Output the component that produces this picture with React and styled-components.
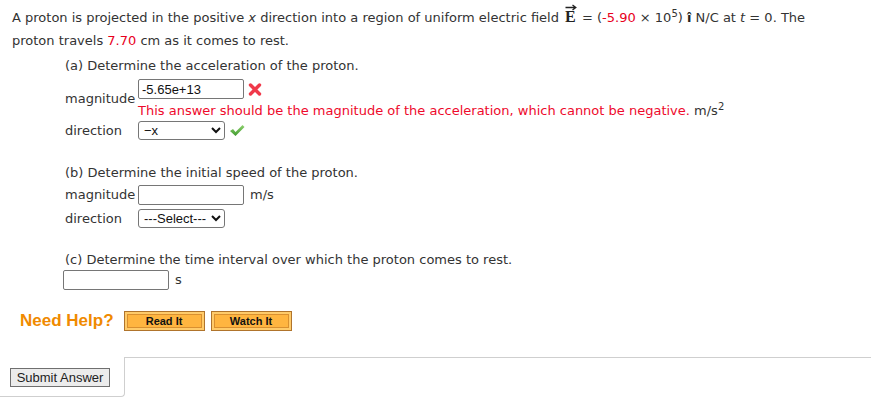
import React from "react";
import styled, { createGlobalStyle } from "styled-components";

const Global = createGlobalStyle`
  body {
    margin: 0;
    background: #fff;
  }
`;

const Page = styled.div`
  padding: 6px 12px 0;
  color: #333;
  font: 13px/16px "DejaVu Sans", Verdana, sans-serif;
`;

const Intro = styled.p`
  margin: 0;
  line-height: 23px;
  max-width: 812px;
`;

const Red = styled.span`
  color: #e8001c;
`;

const Sup = styled.sup`
  font-size: 10px;
  line-height: 0;
`;

const Vec = styled.span`
  position: relative;
  display: inline-block;
  font: bold 16px/16px "Liberation Serif", serif;
  color: #222;
  margin: 0 2px;
`;

const VecArrow = styled.svg`
  position: absolute;
  left: 0;
  top: -5px;
`;

const Hat = styled.b`
  color: #222;
`;

const Part = styled.div`
  padding-left: 53px;
  margin-top: ${(p) => p.$top}px;
`;

const Title = styled.div`
  line-height: 16px;
`;

const Fields = styled.div`
  display: grid;
  grid-template-columns: 73px auto;
  justify-content: start;
  align-items: center;
  row-gap: ${(p) => p.$gap}px;
  margin-top: ${(p) => p.$top}px;
`;

const Label = styled.div``;

const Cell = styled.div`
  display: flex;
  flex-direction: column;
  align-items: flex-start;
`;

const Inline = styled.div`
  display: flex;
  align-items: center;
  gap: ${(p) => p.$gap || 4}px;
  margin-left: ${(p) => p.$shift || 0}px;
  margin-top: ${(p) => p.$top || 0}px;
`;

const Input = styled.input`
  box-sizing: border-box;
  width: 106px;
  height: 20px;
  margin: 0;
  padding: 0 3px;
  border: 1px solid #767676;
  border-radius: 2px;
  font: 13px "Liberation Sans", Arial, sans-serif;
  color: #111;
  background: #fff;
`;

const Select = styled.select`
  box-sizing: border-box;
  width: 87px;
  height: 19px;
  margin: 0;
  padding: 0 1px;
  border: 1px solid #767676;
  border-radius: 3px;
  font: 13px "Liberation Sans", Arial, sans-serif;
  color: #111;
  background: #fff;
`;

const ErrorLine = styled.div`
  margin-top: 4px;
  line-height: 16px;
  color: #ee0a2c;
`;

const Unit = styled.span`
  color: #333;
`;

const HelpRow = styled.div`
  display: flex;
  align-items: center;
  margin: 21px 0 0 8px;
`;

const HelpText = styled.span`
  font: bold 17px "Liberation Sans", Arial, sans-serif;
  color: #f08a00;
  margin-right: 10px;
`;

const HelpButton = styled.button`
  box-sizing: border-box;
  width: 81px;
  height: 20px;
  margin-right: 6px;
  padding: 0;
  border: 1px solid #b0742c;
  background: #ffb540;
  box-shadow: inset 0 0 0 2px #ffcb6a, inset 0 0 0 3px #d99030;
  font: bold 11px "Liberation Sans", Arial, sans-serif;
  color: #111;
`;

const Footer = styled.div`
  display: flex;
  margin: 26px -12px 0;
`;

const SubmitCell = styled.div`
  box-sizing: border-box;
  width: 125px;
  height: 40px;
  padding: 11px 0 0 10px;
  border-right: 1px solid #cfcfcf;
  border-bottom: 1px solid #cfcfcf;
  border-bottom-right-radius: 4px;
`;

const Rest = styled.div`
  flex: 1;
  border-top: 1px solid #cfcfcf;
`;

const SubmitButton = styled.button`
  box-sizing: border-box;
  width: 100px;
  height: 19px;
  margin: 0;
  padding: 0;
  border: 1px solid #6f6f6f;
  background: #ececec;
  font: 13px "Liberation Sans", Arial, sans-serif;
  color: #222;
`;

const WrongIcon = () => (
  <svg width="14" height="13" viewBox="0 0 14 13">
    <path d="M2.5 2 L11.5 11 M11.5 2 L2.5 11" stroke="#f0394a" strokeWidth="3.4" strokeLinecap="round" />
  </svg>
);

const RightIcon = () => (
  <svg width="16" height="13" viewBox="0 0 16 13">
    <defs>
      <linearGradient id="ck" x1="0" y1="0" x2="0" y2="1">
        <stop offset="0" stopColor="#8fd16f" />
        <stop offset="1" stopColor="#3f9a2e" />
      </linearGradient>
    </defs>
    <path d="M1 7 L4 5 L6.5 8 L13.5 1 L15.5 3 L6.5 12 Z" fill="url(#ck)" />
  </svg>
);

export default function App() {
  return (
    <>
      <Global />
      <Page>
        <Intro>
          A proton is projected in the positive <i>x</i> direction into a region of uniform electric field{" "}
          <Vec>
            <VecArrow width="12" height="7" viewBox="0 0 12 7">
              <path d="M0.5 3.5 H10 M7.5 1 L10.8 3.5 L7.5 6" stroke="#222" strokeWidth="1.3" fill="none" />
            </VecArrow>
            E
          </Vec>{" "}
          = (<Red>-5.90</Red> × 10<Sup>5</Sup>) <Hat>î</Hat> N/C at <i>t</i> = 0. The proton travels{" "}
          <Red>7.70</Red> cm as it comes to rest.
        </Intro>

        <Part $top={6}>
          <Title>(a) Determine the acceleration of the proton.</Title>
          <Fields $top={5} $gap={2}>
            <Label>magnitude</Label>
            <Cell>
              <Inline>
                <Input defaultValue="-5.65e+13" />
                <WrongIcon />
              </Inline>
              <ErrorLine>
                This answer should be the magnitude of the acceleration, which cannot be negative.{" "}
                <Unit>
                  m/s<Sup>2</Sup>
                </Unit>
              </ErrorLine>
            </Cell>
            <Label>direction</Label>
            <Inline>
              <Select defaultValue="-x">
                <option value="-x">−x</option>
                <option value="+x">+x</option>
              </Select>
              <RightIcon />
            </Inline>
          </Fields>
        </Part>

        <Part $top={25}>
          <Title>(b) Determine the initial speed of the proton.</Title>
          <Fields $top={4} $gap={4}>
            <Label>magnitude</Label>
            <Inline $gap={6}>
              <Input />
              <span>m/s</span>
            </Inline>
            <Label>direction</Label>
            <Inline>
              <Select defaultValue="">
                <option value="">---Select---</option>
                <option value="+x">+x</option>
                <option value="-x">−x</option>
              </Select>
            </Inline>
          </Fields>
        </Part>

        <Part $top={24}>
          <Title>(c) Determine the time interval over which the proton comes to rest.</Title>
          <Inline $gap={6} $shift={-2} $top={2}>
            <Input />
            <span>s</span>
          </Inline>
        </Part>

        <HelpRow>
          <HelpText>Need Help?</HelpText>
          <HelpButton>Read It</HelpButton>
          <HelpButton>Watch It</HelpButton>
        </HelpRow>

        <Footer>
          <SubmitCell>
            <SubmitButton>Submit Answer</SubmitButton>
          </SubmitCell>
          <Rest />
        </Footer>
      </Page>
    </>
  );
}
